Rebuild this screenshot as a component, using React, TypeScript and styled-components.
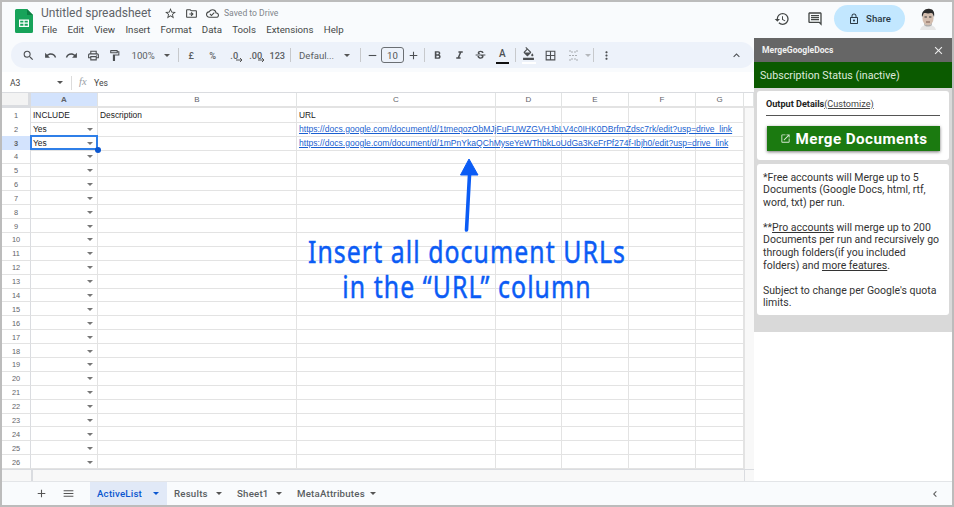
import React from "react";
import styled, { createGlobalStyle } from "styled-components";
import {
  MdSearch, MdUndo, MdRedo, MdOutlineLocalPrintshop, MdOutlineFormatPaint, MdFormatBold, MdFormatItalic,
  MdStrikethroughS, MdFormatColorFill, MdBorderAll, MdMoreVert, MdExpandLess, MdHistory, MdOutlineComment,
  MdLockOutline, MdStarBorder, MdOutlineDriveFileMove, MdOutlineCloudDone, MdAdd, MdMenu, MdChevronLeft,
  MdClose, MdOpenInNew, MdRemove,
} from "react-icons/md";

const Global = createGlobalStyle`
  html, body { margin: 0; padding: 0; background: #fff; }
  * { box-sizing: border-box; }
`;

const Frame = styled.div`
  width: 954px; height: 507px; border: 2px solid #bcbcbc; overflow: hidden; position: relative;
  display: flex; flex-direction: column; background: #fff;
  font-family: Roboto, "Liberation Sans", sans-serif; color: #444746;
`;
const TopBar = styled.header`
  height: 36px; flex: none; background: #f9fbfd; display: flex; align-items: flex-start; padding: 0 0 0 13px;
`;
const Logo = styled.svg`width: 18px; height: 24px; margin-top: 7px; flex: none;`;
const TitleBlock = styled.div`display: flex; flex-direction: column; margin-left: 8px; flex: 1;`;
const TitleRow = styled.div`display: flex; align-items: center; height: 18px; margin-top: 2px; color: #444746;`;
const Title = styled.span`font-size: 12px; color: #5f6368; width: 119px; white-space: nowrap;`;
const TitleIcon = styled.span`width: 21px; display: flex; justify-content: center; font-size: 13px;`;
const Saved = styled.span`font-size: 8.6px; color: #80868b; margin-left: 1px;`;
const MenuRow = styled.nav`display: flex; gap: 10.3px; font-size: 9.7px; color: #444746; margin-top: 2px; padding-left: 1px;`;
const RightTools = styled.div`display: flex; align-items: center; height: 33px; color: #444746; font-size: 15px;`;
const RoundIcon = styled.span`width: 33px; display: flex; justify-content: center; font-size: 16px;`;
const Share = styled.button`
  width: 71px; height: 27px; margin-left: 3px; border: 0; border-radius: 14px; background: #c2e7ff; color: #2b3a45;
  display: flex; align-items: center; justify-content: center; gap: 6px; font: 500 9.6px Roboto, sans-serif;
  & svg { font-size: 12px; }
`;
const Avatar = styled.svg`width: 20px; height: 22px; margin: 0 14px 0 13px;`;

const Main = styled.div`flex: 1; display: flex; min-height: 0;`;
const LeftColumn = styled.div`width: 752px; flex: none; display: flex; flex-direction: column; background: #fff;`;
const ToolbarArea = styled.div`height: 34px; flex: none; padding: 4px 0 4px 9px; background: #f9fbfd;`;
const Toolbar = styled.div`
  height: 26px; background: #edf2fa; border-radius: 13px; display: flex; align-items: center; padding-left: 7px;
  color: #444746; width: 100%;
`;
const ToolBtn = styled.span<{ $w?: number; $faded?: boolean }>`
  width: ${(p) => p.$w ?? 21.5}px; flex: none; height: 20px; display: flex; align-items: center; justify-content: center;
  font-size: 13px; color: ${(p) => (p.$faded ? "#b5b8bc" : "#4c4f52")}; position: relative;
`;
const TextBtn = styled(ToolBtn)`font-size: 9.2px; font-weight: 500; color: #5a5e62;`;
const Sep = styled.span`width: 1px; height: 14px; background: #c7c9cc; margin: 0 2px; flex: none;`;
const Select = styled.span<{ $w: number; $pr: number }>`
  width: ${(p) => p.$w}px; flex: none; display: flex; align-items: center; justify-content: space-between;
  font-size: 9.6px; padding: 0 ${(p) => p.$pr}px 0 6px; color: #5a5e62;
`;
const SmallCaret = styled.span<{ $color?: string }>`
  width: 0; height: 0; border-left: 3px solid transparent; border-right: 3px solid transparent;
  border-top: 3px solid ${(p) => p.$color ?? "#555"}; flex: none; display: inline-block;
`;
const SizeBox = styled.span`
  width: 23px; height: 16px; border: 1px solid #6b6f73; border-radius: 3px; flex: none; font-size: 9.6px;
  display: flex; align-items: center; justify-content: center; color: #555;
`;
const ColorBar = styled.span<{ $c: string }>`
  position: absolute; left: 4px; right: 4px; bottom: 1px; height: 2.5px; background: ${(p) => p.$c};
`;
const LetterA = styled.span`font-size: 10px; font-weight: 500; line-height: 1; margin-bottom: 3px;`;
const Spacer = styled.span`flex: 1;`;

const FormulaBar = styled.div`height: 20px; flex: none; display: flex; align-items: center; font-size: 8.6px; color: #444; background:#fff; padding-top: 1px;`;
const NameBox = styled.span`width: 66px; padding-left: 8px; display: flex; justify-content: space-between; align-items: center; padding-right: 5px;`;
const Fx = styled.span`
  margin-left: 3px; padding-left: 7px; border-left: 1px solid #dcdcdc; width: 23px; color: #9aa0a6; font: italic 10.5px "Liberation Serif", serif; height:14px;
`;

const SheetArea = styled.div`flex: 1; display: flex; flex-direction: column; min-height: 0; position: relative; border-top: 1px solid #dadce0;`;
const GridRow = styled.div<{ $head?: boolean }>`
  display: grid; grid-template-columns: 29px 67px 199px 199px 66px 67px 67px 48px 10px; flex: none;
  height: ${(p) => (p.$head ? "15px" : "13.9px")};
`;
const Corner = styled.div`background: #f3f3f3; border-right: 3px solid #dadce0; border-bottom: 3px solid #dadce0;`;
const ColHead = styled.div<{ $on?: boolean }>`
  background: ${(p) => (p.$on ? "#d3e3fd" : "#fff")}; border-right: 1px solid #e1e3e3; border-bottom: 2px solid #e3e3e3;
  font: ${(p) => (p.$on ? "bold" : "normal")} 8px "Liberation Sans", sans-serif; color: #5f6368;
  display: flex; align-items: center; justify-content: center;
`;
const RowHead = styled.div<{ $on?: boolean }>`
  background: ${(p) => (p.$on ? "#d3e3fd" : "#fff")}; border-right: 1px solid #dadce0; border-bottom: 1px solid #e3e3e3;
  font: ${(p) => (p.$on ? "bold" : "normal")} 7.4px "Liberation Sans", sans-serif; color: #5f6368;
  display: flex; align-items: center; justify-content: center; padding-top: 1px;
`;
const Cell = styled.div`
  border-right: 1px solid #e3e3e3; border-bottom: 1px solid #e3e3e3; font: 8.4px/13px "Liberation Sans", sans-serif;
  color: #222; padding: 1px 4px 0 2px; white-space: nowrap; display: flex; align-items: center; justify-content: space-between;
  min-width: 0; position: relative;
`;
const UrlLink = styled.a`color: #1a5fd0; text-decoration: underline; font-size: 8.57px; position: relative; z-index: 1;`;
const ScrollCell = styled.div`background: #f8f8f8; border-left: 1px solid #e3e3e3;`;
const Selected = styled.span`
  position: absolute; inset: -1px -1px 0 -1px; border: 2px solid #2f7fe8; pointer-events: none; z-index: 2;
`;
const Handle = styled.span`
  position: absolute; right: -4px; bottom: -3.5px; width: 6px; height: 6px; border-radius: 50%; background: #0b57d0; z-index: 3;
`;
const HScroll = styled.div`
  flex: 1; background: #f8f8f8; border-top: 1px solid #dadce0; display: flex;
`;
const HScrollHead = styled.span`width: 31px; border-right: 2px solid #dadce0; flex: none;`;
const HScrollEnd = styled.span`width: 10px; margin-left: auto; border-left: 1px solid #dadce0;`;

const Side = styled.aside`flex: 1; display: flex; flex-direction: column; background: #fff; min-width: 0;`;
const SideHeader = styled.div`
  height: 24px; background: #666; color: #f0f0f0; display: flex; align-items: center; justify-content: space-between;
  padding: 0 7px 0 8px; font-size: 8.6px; font-weight: 700; & svg { font-size: 13px; color:#eee; }
`;
const Status = styled.div`
  height: 26px; background: #0b5a00; color: #dfeadb; display: flex; align-items: center; padding-left: 6px; font-size: 10.7px;
`;
const SideBody = styled.div`
  background: #d9d9d9; padding: 3px 3px 17px; display: flex; flex-direction: column; gap: 4px;
`;
const Card = styled.div`background: #fff; border-radius: 3px;`;
const OutputCard = styled(Card)`padding: 6px 9px 8px 9px; height: 69px;`;
const OutputTitle = styled.div`
  font-size: 9.1px; color: #222; border-bottom: 1px solid #555; height: 19px; line-height: 15px; margin-bottom: 10px;
  & b { font-weight: 700; } & u { color: #444; }
`;
const MergeButton = styled.button`
  width: 173px; height: 25px; margin-left: 1px; border: 0; background: #1b7a10; color: #fff; font: 700 15.2px Roboto, sans-serif;
  display: flex; align-items: center; justify-content: center; gap: 5px; box-shadow: 0 1px 3px rgba(0,0,0,.55);
  letter-spacing: .45px; & svg { font-size: 11px; color: #d8e8d4; }
`;
const InfoCard = styled(Card)`padding: 7.5px 7px 6px 6px; font-size: 10.5px; line-height: 12.6px; color: #333; height: 151px;`;
const Para = styled.p`margin: 0 0 12.6px; &:last-child { margin: 0; }`;

const TabBar = styled.footer`
  height: 24px; flex: none; background: #f9fbfd; border-top: 1px solid #e3e5e8; display: flex; align-items: stretch; color: #444746;
`;
const TabIcon = styled.span`width: 27px; display: flex; align-items: center; justify-content: center; font-size: 13px; color: #555;`;
const TabIcons = styled.div`display: flex; margin-left: 26px; margin-right: 8px;`;
const Tab = styled.div<{ $on?: boolean; $w: number }>`
  width: ${(p) => p.$w}px; display: flex; align-items: center; justify-content: space-between; padding: 0 8px 0 7px;
  font-size: 9.7px; font-weight: 500; letter-spacing: .2px;
  color: ${(p) => (p.$on ? "#0b57d0" : "#5a5e62")}; background: ${(p) => (p.$on ? "#e1e9f7" : "transparent")};
`;
const CollapseIcon = styled(TabIcon)`margin-left: auto; margin-right: 5px; width: 24px; font-size: 12px;`;

const Annotation = styled.div`
  position: absolute; left: 255px; top: 232px; width: 420px; text-align: center; color: #0b5cf5; pointer-events: none;
  font: 400 31px/35px "Noto Sans", sans-serif; letter-spacing: 1.35px; z-index: 3; transform: scaleX(0.8);
  -webkit-text-stroke: .5px #0b5cf5; white-space: nowrap;
`;
const Arrow = styled.svg`position: absolute; left: 450px; top: 153px; width: 36px; height: 80px; z-index: 3;`;

const rows = Array.from({ length: 26 }, (_, i) => i + 1);
const cols = ["A", "B", "C", "D", "E", "F", "G", ""];
const urls: Record<number, string> = {
  2: "https://docs.google.com/document/d/1tmeqozObMJjFuFUWZGVHJbLV4c0IHK0DBrfmZdsc7rk/edit?usp=drive_link",
  3: "https://docs.google.com/document/d/1mPnYkaQChMyseYeWThbkLoUdGa3KeFrPf274f-Ibjh0/edit?usp=drive_link",
};
const menus = ["File", "Edit", "View", "Insert", "Format", "Data", "Tools", "Extensions", "Help"];

function DecimalIcon({ label }: { label: string }) {
  return (
    <TextBtn>
      {label}
      <svg width="7" height="6" viewBox="0 0 7 6" style={{ position: "absolute", right: 2, bottom: 2 }}>
        <path d="M0 3h5M4 1l2 2-2 2" fill="none" stroke="#555" strokeWidth="1" />
      </svg>
    </TextBtn>
  );
}

export default function App() {
  return (
    <>
      <Global />
      <Frame>
        <TopBar>
          <Logo viewBox="0 0 18 24">
            <path d="M1.5 0H12l6 6v16.5a1.5 1.5 0 0 1-1.5 1.5h-15A1.5 1.5 0 0 1 0 22.5v-21A1.5 1.5 0 0 1 1.5 0z" fill="#17a35a" />
            <path d="M12 0l6 6h-6z" fill="#0c7f43" />
            <path d="M4 10.5h10v7.5H4zM5.2 11.7v1.9h3.2v-1.9zM9.6 11.7v1.9h3.2v-1.9zM5.2 14.8v2h3.2v-2zM9.6 14.8v2h3.2v-2z" fill="#fff" fillRule="evenodd" />
          </Logo>
          <TitleBlock>
            <TitleRow>
              <Title>Untitled spreadsheet</Title>
              <TitleIcon><MdStarBorder /></TitleIcon>
              <TitleIcon><MdOutlineDriveFileMove /></TitleIcon>
              <TitleIcon><MdOutlineCloudDone /></TitleIcon>
              <Saved>Saved to Drive</Saved>
            </TitleRow>
            <MenuRow>{menus.map((m) => <span key={m}>{m}</span>)}</MenuRow>
          </TitleBlock>
          <RightTools>
            <RoundIcon><MdHistory /></RoundIcon>
            <RoundIcon><MdOutlineComment /></RoundIcon>
            <Share><MdLockOutline />Share</Share>
            <Avatar viewBox="0 0 20 22">
              <path d="M2 22c1-4 4-5 8-5s7 1 8 5z" fill="#e6e6e6" />
              <ellipse cx="10" cy="10" rx="5.6" ry="7.4" fill="#d3bdae" />
              <path d="M4 9C3 3 8 0 12 1c3 0 5 3 4 8-1-2-1-4-3-4-3 1-6 0-7 0-1 1-1 3-2 4z" fill="#2a2a2a" />
              <path d="M6.5 9h2.4M11 9h2.4" stroke="#333" strokeWidth="1" />
              <path d="M8 14h4" stroke="#7a5a50" strokeWidth="1" />
              <path d="M6 15c1 3 7 3 8 0v2c-2 2-6 2-8 0z" fill="#777" opacity=".5" />
            </Avatar>
          </RightTools>
        </TopBar>
        <Main>
          <LeftColumn>
            <ToolbarArea>
              <Toolbar>
                <ToolBtn><MdSearch /></ToolBtn>
                <ToolBtn><MdUndo /></ToolBtn>
                <ToolBtn><MdRedo /></ToolBtn>
                <ToolBtn><MdOutlineLocalPrintshop /></ToolBtn>
                <ToolBtn><MdOutlineFormatPaint /></ToolBtn>
                <Select $w={50} $pr={5.5}>100%<SmallCaret /></Select>
                <Sep />
                <TextBtn>£</TextBtn>
                <TextBtn>%</TextBtn>
                <DecimalIcon label=".0" />
                <DecimalIcon label=".00" />
                <TextBtn>123</TextBtn>
                <Sep />
                <Select $w={65} $pr={8}>Defaul...<SmallCaret /></Select>
                <Sep />
                <ToolBtn $w={18}><MdRemove /></ToolBtn>
                <SizeBox>10</SizeBox>
                <ToolBtn $w={18}><MdAdd /></ToolBtn>
                <Sep />
                <ToolBtn><MdFormatBold /></ToolBtn>
                <ToolBtn><MdFormatItalic /></ToolBtn>
                <ToolBtn><MdStrikethroughS /></ToolBtn>
                <ToolBtn><LetterA>A</LetterA><ColorBar $c="#111" /></ToolBtn>
                <Sep />
                <ToolBtn><MdFormatColorFill style={{ marginBottom: 3 }} /><ColorBar $c="#fff" /></ToolBtn>
                <ToolBtn><MdBorderAll /></ToolBtn>
                <ToolBtn $faded $w={24}>
                  <svg width="11" height="11" viewBox="0 0 11 11" fill="none" stroke="#a9adb1" strokeWidth="1">
                    <path d="M1 1h3v3M10 1H7v3M1 10h3V7M10 10H7V7M1 5.5h9" strokeDasharray="2 1" />
                  </svg>
                </ToolBtn>
                <SmallCaret $color="#b5b8bc" />
                <Sep />
                <ToolBtn><MdMoreVert /></ToolBtn>
                <Spacer />
                <ToolBtn $w={36}><MdExpandLess /></ToolBtn>
              </Toolbar>
            </ToolbarArea>
            <FormulaBar>
              <NameBox>A3<SmallCaret /></NameBox>
              <Fx>fx</Fx>
              <span>Yes</span>
            </FormulaBar>
            <SheetArea>
              <GridRow $head>
                <Corner />
                {cols.map((c, i) => <ColHead key={i} $on={c === "A"}>{c}</ColHead>)}
              </GridRow>
              {rows.map((r) => (
                <GridRow key={r}>
                  <RowHead $on={r === 3}>{r}</RowHead>
                  <Cell>
                    {r === 1 ? "INCLUDE" : r <= 3 ? "Yes" : <span />}
                    {r > 1 && <SmallCaret $color="#777" />}
                    {r === 3 && <><Selected /><Handle /></>}
                  </Cell>
                  <Cell>{r === 1 ? "Description" : ""}</Cell>
                  <Cell>
                    {r === 1 ? "URL" : urls[r] ? <UrlLink>{urls[r]}</UrlLink> : ""}
                  </Cell>
                  <Cell /><Cell /><Cell /><Cell />
                  <ScrollCell />
                </GridRow>
              ))}
              <HScroll><HScrollHead /><HScrollEnd /></HScroll>
            </SheetArea>
          </LeftColumn>
          <Side>
            <SideHeader>MergeGoogleDocs<MdClose /></SideHeader>
            <Status>Subscription Status (inactive)</Status>
            <SideBody>
              <OutputCard>
                <OutputTitle><b>Output Details</b><u>(Customize)</u></OutputTitle>
                <MergeButton><MdOpenInNew />Merge Documents</MergeButton>
              </OutputCard>
              <InfoCard>
                <Para>*Free accounts will Merge up to 5 Documents (Google Docs, html, rtf, word, txt) per run.</Para>
                <Para>**<u>Pro accounts</u> will merge up to 200 Documents per run and recursively go through folders(if you included folders) and <u>more features</u>.</Para>
                <Para>Subject to change per Google's quota limits.</Para>
              </InfoCard>
            </SideBody>
          </Side>
        </Main>
        <TabBar>
          <TabIcons>
            <TabIcon><MdAdd /></TabIcon>
            <TabIcon><MdMenu /></TabIcon>
          </TabIcons>
          <Tab $on $w={77}>ActiveList<SmallCaret $color="#0b57d0" /></Tab>
          <Tab $w={63}>Results<SmallCaret /></Tab>
          <Tab $w={60}>Sheet1<SmallCaret /></Tab>
          <Tab $w={94}>MetaAttributes<SmallCaret /></Tab>
          <CollapseIcon><MdChevronLeft /></CollapseIcon>
        </TabBar>
        <Arrow viewBox="0 0 36 80">
          <path d="M17 4 L8.5 20 L26 20 Z" fill="#0b5cf5" stroke="#0b5cf5" strokeLinejoin="round" />
          <path d="M17.5 20 L14.5 75" stroke="#0b5cf5" strokeWidth="3.6" strokeLinecap="round" />
        </Arrow>
        <Annotation>Insert all document URLs<br />in the “URL” column</Annotation>
      </Frame>
    </>
  );
}
